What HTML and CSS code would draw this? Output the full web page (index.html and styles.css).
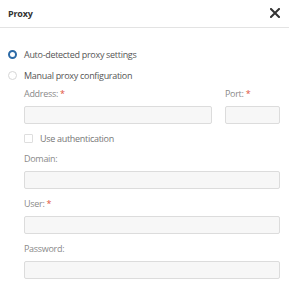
FILE: index.html
```html
<!DOCTYPE html>
<html lang="en">
<head>
  <meta charset="UTF-8">
  <title>Proxy</title>
  <link rel="stylesheet" href="styles.css">
</head>
<body>
  <div class="dialog">
    <div class="dialog-header">
      <span class="dialog-title">Proxy</span>
      <button class="close-btn" aria-label="Close">
        <svg width="10" height="10" viewBox="0 0 10 10">
          <path d="M1 1 L9 9 M9 1 L1 9" stroke="#333" stroke-width="2" stroke-linecap="square"/>
        </svg>
      </button>
    </div>

    <div class="dialog-body">
      <label class="radio-row">
        <span class="radio checked"></span>
        <span>Auto-detected proxy settings</span>
      </label>
      <label class="radio-row">
        <span class="radio"></span>
        <span>Manual proxy configuration</span>
      </label>

      <div class="fields">
        <div class="field-row">
          <div class="field grow">
            <div class="field-label">Address: <span class="req">*</span></div>
            <div class="input"></div>
          </div>
          <div class="field port">
            <div class="field-label">Port: <span class="req">*</span></div>
            <div class="input"></div>
          </div>
        </div>

        <label class="check-row">
          <span class="checkbox"></span>
          <span>Use authentication</span>
        </label>

        <div class="field">
          <div class="field-label">Domain:</div>
          <div class="input"></div>
        </div>
        <div class="field">
          <div class="field-label">User: <span class="req">*</span></div>
          <div class="input"></div>
        </div>
        <div class="field">
          <div class="field-label">Password:</div>
          <div class="input"></div>
        </div>
      </div>
    </div>
  </div>
</body>
</html>
```

FILE: styles.css
```css
* {
  margin: 0;
  padding: 0;
  box-sizing: border-box;
  font-family: 'Open Sans', 'Liberation Sans', sans-serif;
}

body {
  background: #fff;
  width: 289px;
  height: 300px;
}

.dialog-header {
  height: 28px;
  border-bottom: 1px solid #e3e3e3;
  display: flex;
  align-items: center;
  justify-content: space-between;
  padding: 0 8px 1px 8px;
}

.dialog-title {
  font-size: 9px;
  letter-spacing: -0.2px;
  font-weight: bold;
  color: #333;
}

.close-btn {
  background: none;
  border: none;
  width: 10px;
  height: 10px;
  display: flex;
  margin-right: 1px;
}

.dialog-body {
  padding: 19px 9px 0 8px;
}

.radio-row,
.check-row {
  display: flex;
  align-items: center;
  height: 14px;
  font-size: 9px;
  letter-spacing: -0.3px;
  color: #555;
}

.radio-row + .radio-row {
  margin-top: 7px;
}

.radio {
  width: 9px;
  height: 9px;
  border-radius: 50%;
  border: 1px solid #d6d6d6;
  margin-right: 7px;
  flex: none;
}

.radio.checked {
  border: 2.5px solid #2c6aa6;
}

.fields {
  padding-left: 16px;
  margin-top: 6px;
}

.field-row {
  display: flex;
  gap: 13px;
}

.grow {
  flex: 1;
}

.port {
  width: 55px;
}

.field-label {
  font-size: 9px;
  letter-spacing: -0.3px;
  line-height: 12px;
  color: #8a8a8a;
  margin-bottom: 6px;
}

.req {
  color: #e0513a;
}

.input {
  height: 18px;
  background: #f7f7f7;
  border: 1px solid #dcdcdc;
  border-radius: 2px;
}

.check-row {
  margin-top: 8px;
  height: 12px;
  color: #777;
}

.checkbox {
  width: 9px;
  height: 9px;
  border: 1px solid #dedede;
  border-radius: 1px;
  margin-right: 7px;
}

.field {
  margin-top: 9px;
}

.field-row .field {
  margin-top: 0;
}

.check-row + .field {
  margin-top: 9px;
}
```
